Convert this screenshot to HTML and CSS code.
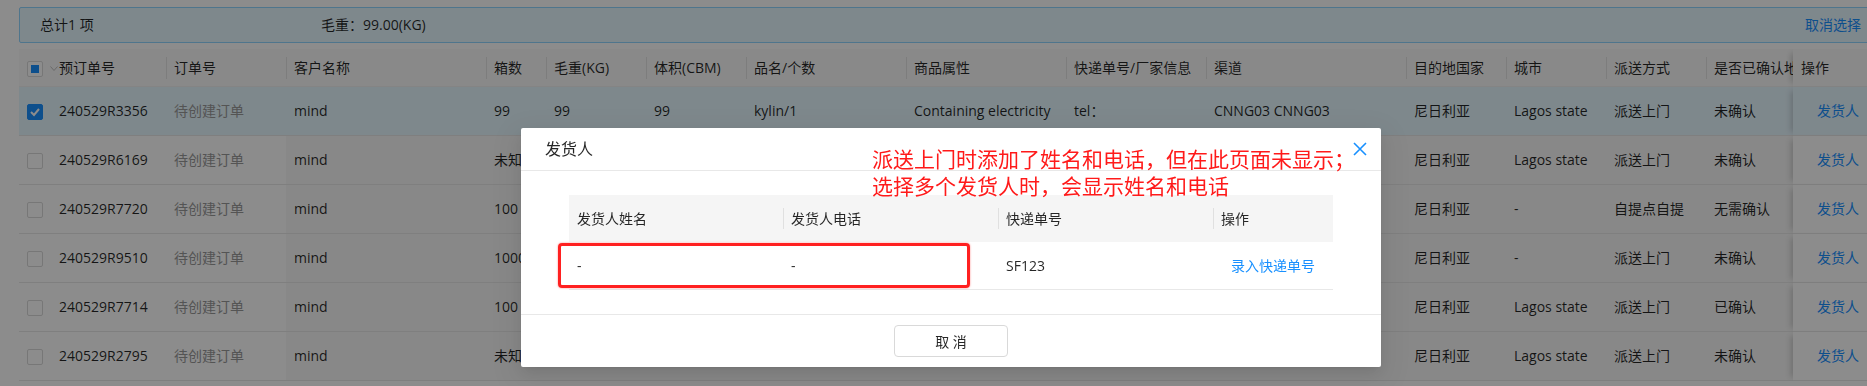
FILE: index.html
```html
<!DOCTYPE html>
<html lang="zh-CN">
<head>
<meta charset="utf-8">
<title>订单列表</title>
<link rel="stylesheet" href="styles.css">
</head>
<body>
<div class="page">
  <div class="summary">
    <span class="sum-count">总计1 项</span>
    <span class="sum-weight">毛重：99.00(KG)</span>
    <a class="link sum-clear">取消选择</a>
  </div>
  <div class="table-wrap">
    <table class="grid">
      <colgroup>
        <col class="w40"><col class="w107"><col class="w120"><col class="w200"><col class="w60">
        <col class="w100"><col class="w100"><col class="w160"><col class="w160"><col class="w140">
        <col class="w200"><col class="w100"><col class="w100"><col class="w100"><col class="w87"><col class="w90">
      </colgroup>
      <thead>
        <tr>
          <th class="c-check"><span class="cb indet"><span class="cb-dot"></span></span><svg class="chev" width="8" height="5" viewBox="0 0 8 5"><polyline points="0.5,0.5 4,4.5 7.5,0.5" fill="none" stroke="#bfbfbf" stroke-width="1"/></svg></th>
          <th class="nopad">预订单号</th>
          <th class="div">订单号</th>
          <th class="div">客户名称</th>
          <th class="div">箱数</th>
          <th class="div">毛重(KG)</th>
          <th class="div">体积(CBM)</th>
          <th class="div">品名/个数</th>
          <th class="div">商品属性</th>
          <th class="div">快递单号/厂家信息</th>
          <th class="div">渠道</th>
          <th class="div">目的地国家</th>
          <th class="div">城市</th>
          <th class="div">派送方式</th>
          <th class="div clip">是否已确认地址</th>
          <th class="c-op">操作</th>
        </tr>
      </thead>
      <tbody>
        <tr class="sel">
          <td class="fix c-check"><span class="cb checked"><svg width="14" height="14" viewBox="0 0 14 14"><polyline points="3,7 6,10 11,4" fill="none" stroke="#fff" stroke-width="2"/></svg></span></td>
          <td class="fix nopad">240529R3356</td><td class="fix muted">待创建订单</td><td>mind</td><td>99</td><td>99</td><td>99</td><td>kylin/1</td><td>Containing electricity</td><td>tel：</td><td>CNNG03 CNNG03</td><td>尼日利亚</td><td>Lagos state</td><td>派送上门</td><td>未确认</td>
          <td class="c-op"><a class="link">发货人</a></td>
        </tr>
        <tr>
          <td class="fix c-check"><span class="cb"></span></td>
          <td class="fix nopad">240529R6169</td><td class="fix muted">待创建订单</td><td>mind</td><td>未知</td><td></td><td></td><td></td><td></td><td></td><td></td><td>尼日利亚</td><td>Lagos state</td><td>派送上门</td><td>未确认</td>
          <td class="c-op"><a class="link">发货人</a></td>
        </tr>
        <tr>
          <td class="fix c-check"><span class="cb"></span></td>
          <td class="fix nopad">240529R7720</td><td class="fix muted">待创建订单</td><td>mind</td><td>100</td><td></td><td></td><td></td><td></td><td></td><td></td><td>尼日利亚</td><td>-</td><td>自提点自提</td><td>无需确认</td>
          <td class="c-op"><a class="link">发货人</a></td>
        </tr>
        <tr>
          <td class="fix c-check"><span class="cb"></span></td>
          <td class="fix nopad">240529R9510</td><td class="fix muted">待创建订单</td><td>mind</td><td>1000</td><td></td><td></td><td></td><td></td><td></td><td></td><td>尼日利亚</td><td>-</td><td>派送上门</td><td>未确认</td>
          <td class="c-op"><a class="link">发货人</a></td>
        </tr>
        <tr>
          <td class="fix c-check"><span class="cb"></span></td>
          <td class="fix nopad">240529R7714</td><td class="fix muted">待创建订单</td><td>mind</td><td>100</td><td></td><td></td><td></td><td></td><td></td><td></td><td>尼日利亚</td><td>Lagos state</td><td>派送上门</td><td>已确认</td>
          <td class="c-op"><a class="link">发货人</a></td>
        </tr>
        <tr>
          <td class="fix c-check"><span class="cb"></span></td>
          <td class="fix nopad">240529R2795</td><td class="fix muted">待创建订单</td><td>mind</td><td>未知</td><td></td><td></td><td></td><td></td><td></td><td></td><td>尼日利亚</td><td>Lagos state</td><td>派送上门</td><td>未确认</td>
          <td class="c-op"><a class="link">发货人</a></td>
        </tr>
      </tbody>
    </table>
  </div>
</div>

<div class="mask"></div>

<div class="modal">
  <div class="modal-head">
    <span class="modal-title">发货人</span>
    <svg class="modal-close" width="14" height="14" viewBox="0 0 14 14"><path d="M1 1 L13 13 M13 1 L1 13" stroke="#1890ff" stroke-width="1.6" fill="none"/></svg>
  </div>
  <div class="modal-body">
    <table class="inner">
      <colgroup><col class="i214"><col class="i215"><col class="i215"><col class="i120"></colgroup>
      <thead>
        <tr><th>发货人姓名</th><th class="div">发货人电话</th><th class="div">快递单号</th><th class="div">操作</th></tr>
      </thead>
      <tbody>
        <tr><td>-</td><td>-</td><td>SF123</td><td class="op-cell"><a class="link">录入快递单号</a></td></tr>
      </tbody>
    </table>
  </div>
  <div class="modal-foot">
    <button class="btn">取 消</button>
  </div>
  <div class="note">派送上门时添加了姓名和电话，但在此页面未显示；<br>选择多个发货人时，会显示姓名和电话</div>
  <div class="note-box"></div>
</div>
</body>
</html>
```

FILE: styles.css
```css
html, body {
  margin: 0;
  padding: 0;
}

body {
  width: 1867px;
  height: 386px;
  overflow: hidden;
  background: #fff;
  font-family: "Open Sans", "Noto Sans CJK SC", sans-serif;
  font-size: 14px;
  line-height: 22px;
  color: rgba(0, 0, 0, 0.85);
}

.link {
  color: #1890ff;
  cursor: pointer;
}

.page {
  width: 1864px;
  padding: 7px 0 0 19px;
}

/* summary bar */
.summary {
  box-sizing: border-box;
  height: 36px;
  display: flex;
  align-items: center;
  padding: 0 21px 0 20px;
  background: #e6f7ff;
  border: 1px solid #91d5ff;
  border-radius: 2px;
}

.sum-count {
  width: 281px;
}

.sum-clear {
  margin-left: auto;
}

/* main table */
.table-wrap {
  margin-top: 6px;
  overflow: hidden;
}

.grid {
  table-layout: fixed;
  width: 1864px;
  border-collapse: separate;
  border-spacing: 0;
}

.w40 { width: 40px; }
.w60 { width: 60px; }
.w87 { width: 87px; }
.w90 { width: 90px; }
.w100 { width: 100px; }
.w107 { width: 107px; }
.w120 { width: 120px; }
.w140 { width: 140px; }
.w160 { width: 160px; }
.w200 { width: 200px; }

.grid th {
  box-sizing: border-box;
  height: 38px;
  padding: 0 8px;
  border-bottom: 1px solid #f0f0f0;
  background: #fafafa;
  text-align: left;
  font-weight: normal;
  white-space: nowrap;
  overflow: hidden;
}

.grid th.clip {
  padding-right: 0;
  text-overflow: clip;
}

.grid th.div {
  background: linear-gradient(#e4e4e4, #e4e4e4) left center / 1px 22px no-repeat, #fafafa;
}

.grid td {
  box-sizing: border-box;
  height: 49px;
  padding: 0 8px;
  border-bottom: 1px solid #e8e8e8;
  background: #f7f7f7;
  white-space: nowrap;
  overflow: hidden;
}

.grid td.fix {
  background: #fff;
}

.grid tr.sel td {
  background: #e6f7ff;
}

.grid .nopad {
  padding-left: 0;
}

.grid .c-check {
  padding: 0 0 0 8px;
  overflow: visible;
}

.chev {
  margin-left: 7px;
  vertical-align: middle;
}

.muted {
  color: #999;
}

.grid .c-op {
  position: sticky;
  right: 0;
  z-index: 2;
  box-shadow: -6px 0 6px -4px rgba(0, 0, 0, 0.18);
}

.grid th.c-op {
  background: #fafafa;
}

.grid td.c-op {
  background: #fff;
  text-align: center;
}

.grid tr.sel td.c-op {
  background: #e6f7ff;
}

/* checkbox */
.cb {
  box-sizing: border-box;
  display: inline-flex;
  align-items: center;
  justify-content: center;
  width: 16px;
  height: 16px;
  border: 1px solid #d9d9d9;
  border-radius: 2px;
  background: #fff;
  vertical-align: middle;
}

.cb.checked {
  background: #1890ff;
  border-color: #1890ff;
}

.cb-dot {
  width: 8px;
  height: 8px;
  background: #1890ff;
}

/* mask + modal */
.mask {
  position: fixed;
  inset: 0;
  background: rgba(0, 0, 0, 0.45);
  z-index: 10;
}

.modal {
  position: absolute;
  left: 521px;
  top: 128px;
  width: 860px;
  background: #fff;
  border-radius: 2px;
  z-index: 20;
  box-shadow: 0 3px 6px -4px rgba(0, 0, 0, 0.12), 0 6px 16px 0 rgba(0, 0, 0, 0.08), 0 9px 28px 8px rgba(0, 0, 0, 0.05);
}

.modal-head {
  display: flex;
  align-items: center;
  justify-content: space-between;
  padding: 10px 14px 10px 24px;
  border-bottom: 1px solid #e8e8e8;
}

.modal-title {
  font-size: 16px;
  line-height: 22px;
}

.modal-body {
  padding: 24px 48px;
}

.inner {
  table-layout: fixed;
  width: 764px;
  border-collapse: separate;
  border-spacing: 0;
}

.i214 { width: 214px; }
.i215 { width: 215px; }
.i120 { width: 120px; }

.inner th {
  box-sizing: border-box;
  height: 47px;
  padding: 0 8px;
  background: #f5f5f5;
  text-align: left;
  font-weight: normal;
  white-space: nowrap;
}

.inner th.div {
  background: linear-gradient(#e0e0e0, #e0e0e0) left center / 1px 21px no-repeat, #f5f5f5;
}

.inner td {
  box-sizing: border-box;
  height: 48px;
  padding: 0 8px;
  border-bottom: 1px solid #e8e8e8;
  white-space: nowrap;
}

.inner td.op-cell {
  text-align: center;
}

.modal-foot {
  padding: 10px 16px;
  border-top: 1px solid #e8e8e8;
  text-align: center;
}

.btn {
  box-sizing: border-box;
  width: 114px;
  height: 32px;
  border: 1px solid #d9d9d9;
  border-radius: 4px;
  background: #fff;
  font-family: "Open Sans", "Noto Sans CJK SC", sans-serif;
  font-size: 14px;
  color: rgba(0, 0, 0, 0.85);
  vertical-align: top;
}

/* annotations drawn over the modal */
.note {
  position: absolute;
  left: 351px;
  top: 17px;
  font-family: "Noto Sans CJK SC", sans-serif;
  font-size: 21px;
  line-height: 27px;
  color: #ff1a1a;
  white-space: nowrap;
}

.note-box {
  position: absolute;
  left: 37px;
  top: 115px;
  width: 412px;
  height: 45px;
  box-sizing: border-box;
  border: 3px solid #ff2020;
  border-radius: 4px;
  box-shadow: 0 0 2px rgba(255, 0, 0, 0.5);
}
```
